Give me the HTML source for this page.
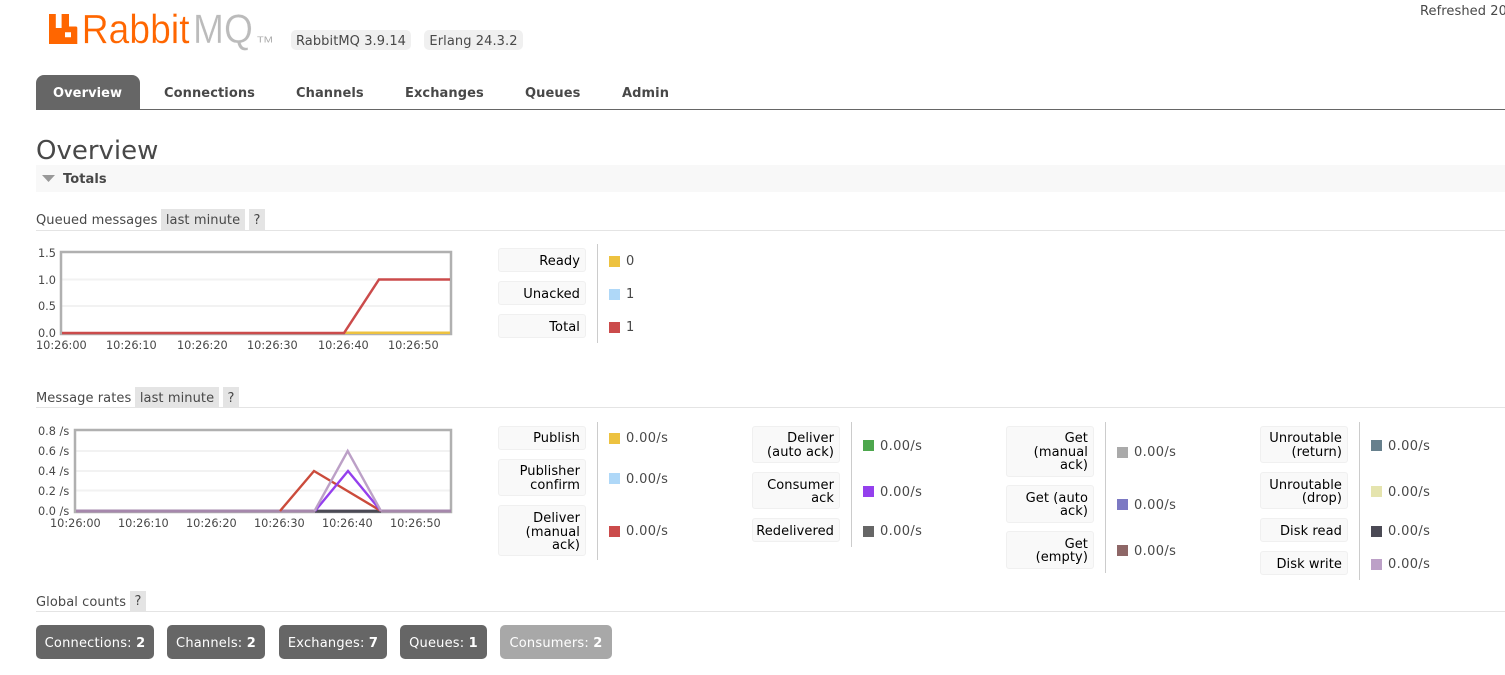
<!DOCTYPE html>
<html><head><meta charset="utf-8"><title>RabbitMQ Management</title>
<style>
html,body{margin:0;padding:0;background:#fff}
body{width:1505px;height:675px;overflow:hidden;position:relative;font-family:"DejaVu Sans","Liberation Sans",sans-serif;font-size:13px;color:#484848;letter-spacing:.08px}
div,span,a{position:absolute;white-space:nowrap}
.t{line-height:16px;height:16px}
.tab{top:86px;font-weight:bold;font-size:13px;line-height:16px;color:#484848}
.btn{background:#e4e4e4;text-align:center;height:21px;line-height:23px}
.hr{left:36px;width:1469px;height:1px;background:#e4e4e4}
.l{width:86px;background:#f9f9f9;border:1px solid #f0f0f0;border-radius:3px;color:#000;text-align:right;line-height:14px;display:flex;align-items:center;justify-content:flex-end;box-sizing:content-box}
.l p{margin:0 5px 0 0;white-space:nowrap;position:relative;top:2px}
.l.a p{top:1px}
.l.n{line-height:13px}
.l.n p{top:1.5px}
.l.n p.u{top:.5px}
.l.m{line-height:13.5px}
.d{width:1px;background:#ccc}
.s{width:11px;height:11px}
.s span{left:17px;top:-3px;line-height:16px;color:#484848;letter-spacing:.35px}
.s.a span{top:-2px}
.c{top:625px;height:34px;line-height:38px;background:#666;color:#fff;border-radius:5px;text-align:center;letter-spacing:.2px}
.y{font-size:11.3px;line-height:12px;color:#484848;letter-spacing:0}
</style></head><body>

<svg style="position:absolute;left:0;top:0" width="300" height="60">
<path fill="#f60" fill-rule="evenodd" d="M49 14H55.800V28H61.600V14H69V26.500H75.800Q77.300 26.500 77.300 28V44H49ZM65 32.300V37.300H71V32.300Z"/>
<text x="81.700" y="42.800" font-family="Liberation Sans" font-size="40.500" fill="#f60" stroke="#fff" stroke-width=".3" textLength="108" lengthAdjust="spacingAndGlyphs">Rabbit</text>
<text x="193" y="42.800" font-family="Liberation Sans" font-size="40.500" fill="#bbb" stroke="#fff" stroke-width=".3" textLength="60" lengthAdjust="spacingAndGlyphs">MQ</text>
<text x="257" y="42.500" font-family="Liberation Sans" font-size="8" fill="#aaa" textLength="16" lengthAdjust="spacingAndGlyphs">TM</text>
</svg>

<div style="left:291px;top:30px;width:120px;height:20px;line-height:23px;background:#f0f0f0;border-radius:5px;text-align:center">RabbitMQ 3.9.14</div>
<div style="left:424px;top:30px;width:99px;height:20px;line-height:23px;background:#f0f0f0;border-radius:5px;text-align:center">Erlang 24.3.2</div>
<div class="t" style="left:1420px;top:4px">Refreshed 20</div>

<div style="left:36px;top:75px;width:104px;height:34px;background:#666;border-radius:8px 8px 0 0"></div>
<div style="left:36px;top:109px;width:1469px;height:1px;background:#666"></div>
<div class="tab" style="left:53px;color:#fff">Overview</div>
<div class="tab" style="left:164px">Connections</div>
<div class="tab" style="left:296px">Channels</div>
<div class="tab" style="left:405px">Exchanges</div>
<div class="tab" style="left:525px">Queues</div>
<div class="tab" style="left:622px">Admin</div>

<div style="left:36px;top:134px;font-size:26px;line-height:34px;letter-spacing:0">Overview</div>
<div style="left:36px;top:165px;width:1469px;height:27px;background:#f8f8f8"></div>
<svg style="position:absolute;left:42px;top:175px" width="14" height="8"><path d="M0 0H13L6.500 7Z" fill="#999"/></svg>
<div class="t" style="left:63px;top:172px;font-weight:bold">Totals</div>

<div class="t" style="left:36px;top:213px">Queued messages</div>
<div class="btn" style="left:161px;top:209px;width:84px">last minute</div>
<div class="btn" style="left:249px;top:209px;width:16px">?</div>
<div class="hr" style="top:230px"></div>

<svg style="position:absolute;left:0;top:240px" width="470" height="110">
<g stroke="#f2f2f2" stroke-width="2"><path d="M61 39.500H451M61 66H451"/></g>
<rect x="61" y="12" width="390" height="82" fill="none" stroke="#b0b0b0" stroke-width="2.500"/>
<path d="M344 92.800H450" stroke="#edc240" stroke-width="2.500" fill="none"/>
<path d="M62 93H344L379 39.500H450" stroke="#cb4b4b" stroke-width="2.500" fill="none"/>
</svg>
<div class="y" style="left:38px;top:248px">1.5</div>
<div class="y" style="left:38px;top:275px">1.0</div>
<div class="y" style="left:38px;top:301px">0.5</div>
<div class="y" style="left:38px;top:328px">0.0</div>
<div class="y" style="left:36px;top:340px">10:26:00</div>
<div class="y" style="left:106px;top:340px">10:26:10</div>
<div class="y" style="left:177px;top:340px">10:26:20</div>
<div class="y" style="left:247px;top:340px">10:26:30</div>
<div class="y" style="left:318px;top:340px">10:26:40</div>
<div class="y" style="left:388px;top:340px">10:26:50</div>

<div class="l" style="left:498px;top:248px;height:22px"><p>Ready</p></div>
<div class="l" style="left:498px;top:281px;height:22px"><p>Unacked</p></div>
<div class="l" style="left:498px;top:314px;height:22px"><p>Total</p></div>
<div class="d" style="left:597px;top:244px;height:99px"></div>
<div class="s a" style="left:609px;top:256px;background:#edc240"><span>0</span></div>
<div class="s a" style="left:609px;top:289px;background:#afd8f8"><span>1</span></div>
<div class="s a" style="left:609px;top:322px;background:#cb4b4b"><span>1</span></div>

<div class="t" style="left:36px;top:391px">Message rates</div>
<div class="btn" style="left:135px;top:387px;width:84px">last minute</div>
<div class="btn" style="left:223px;top:387px;width:16px">?</div>
<div class="hr" style="top:407px"></div>

<svg style="position:absolute;left:0;top:420px" width="470" height="100">
<g stroke="#f2f2f2" stroke-width="2"><path d="M76 31H451M76 51H451M76 70.500H451"/></g>
<rect x="75" y="10" width="376" height="82" fill="none" stroke="#b0b0b0" stroke-width="2.500"/>
<path d="M76 91H451" stroke="#a688ac" stroke-width="3" fill="none"/>
<path d="M315 91.200H381" stroke="#4b4a55" stroke-width="3" fill="none"/>
<path d="M280 91L314 51L381 91" stroke="#cb4b3b" stroke-width="2.400" fill="none"/>
<path d="M315 91L348 51L381 91" stroke="#9440ed" stroke-width="2.400" fill="none"/>
<path d="M314.500 91L347.700 31L381 91" stroke="#bca0c7" stroke-width="2.400" fill="none"/>
</svg>
<div class="y" style="left:38px;top:426px">0.8 /s</div>
<div class="y" style="left:38px;top:446px">0.6 /s</div>
<div class="y" style="left:38px;top:466px">0.4 /s</div>
<div class="y" style="left:38px;top:486px">0.2 /s</div>
<div class="y" style="left:38px;top:506px">0.0 /s</div>
<div class="y" style="left:50px;top:518px">10:26:00</div>
<div class="y" style="left:118px;top:518px">10:26:10</div>
<div class="y" style="left:186px;top:518px">10:26:20</div>
<div class="y" style="left:254px;top:518px">10:26:30</div>
<div class="y" style="left:322px;top:518px">10:26:40</div>
<div class="y" style="left:390px;top:518px">10:26:50</div>

<div class="l a" style="left:498px;top:426px;height:22px"><p>Publish</p></div>
<div class="l a" style="left:498px;top:459px;height:35px"><p>Publisher<br>confirm</p></div>
<div class="l m" style="left:498px;top:505px;height:49px"><p>Deliver<br>(manual<br>ack)</p></div>
<div class="d" style="left:597px;top:422px;height:138px"></div>
<div class="s a" style="left:609px;top:433px;background:#edc240"><span>0.00/s</span></div>
<div class="s" style="left:609px;top:473px;background:#afd8f8"><span style="top:-1px">0.00/s</span></div>
<div class="s a" style="left:609px;top:526px;background:#cb4b4b"><span>0.00/s</span></div>

<div class="l a" style="left:752px;top:426px;height:35px"><p>Deliver<br>(auto ack)</p></div>
<div class="l n" style="left:752px;top:472px;height:35px"><p>Consumer<br>ack</p></div>
<div class="l" style="left:752px;top:518px;height:22px"><p>Redelivered</p></div>
<div class="d" style="left:851px;top:422px;height:125px"></div>
<div class="s" style="left:863px;top:440px;background:#4da74d"><span style="top:-1px">0.00/s</span></div>
<div class="s" style="left:863px;top:486px;background:#9440ed"><span style="top:-1px">0.00/s</span></div>
<div class="s a" style="left:863px;top:526px;background:#666"><span>0.00/s</span></div>

<div class="l a m" style="left:1006px;top:426px;height:49px"><p>Get<br>(manual<br>ack)</p></div>
<div class="l n" style="left:1006px;top:485px;height:36px"><p class="u">Get (auto<br>ack)</p></div>
<div class="l n" style="left:1006px;top:531px;height:36px"><p class="u">Get<br>(empty)</p></div>
<div class="d" style="left:1105px;top:422px;height:151px"></div>
<div class="s a" style="left:1117px;top:447px;background:#aaa"><span>0.00/s</span></div>
<div class="s" style="left:1117px;top:499px;background:#7c79c3"><span style="top:-1px">0.00/s</span></div>
<div class="s" style="left:1117px;top:545px;background:#8e6767"><span style="top:-1px">0.00/s</span></div>

<div class="l a" style="left:1260px;top:426px;height:35px"><p>Unroutable<br>(return)</p></div>
<div class="l n" style="left:1260px;top:472px;height:35px"><p>Unroutable<br>(drop)</p></div>
<div class="l" style="left:1260px;top:518px;height:22px"><p>Disk read</p></div>
<div class="l" style="left:1260px;top:551px;height:22px"><p>Disk write</p></div>
<div class="d" style="left:1359px;top:422px;height:158px"></div>
<div class="s" style="left:1371px;top:440px;background:#67808d"><span style="top:-1px">0.00/s</span></div>
<div class="s" style="left:1371px;top:486px;background:#e5e4ae"><span style="top:-1px">0.00/s</span></div>
<div class="s a" style="left:1371px;top:526px;background:#4b4a55"><span>0.00/s</span></div>
<div class="s a" style="left:1371px;top:559px;background:#bca0c7"><span>0.00/s</span></div>

<div class="t" style="left:36px;top:595px">Global counts</div>
<div class="btn" style="left:130px;top:591px;width:16px;height:20px;line-height:22px">?</div>
<div class="hr" style="top:611px"></div>

<div class="c" style="left:36px;width:118px">Connections: <b>2</b></div>
<div class="c" style="left:167px;width:98px">Channels: <b>2</b></div>
<div class="c" style="left:279px;width:108px">Exchanges: <b>7</b></div>
<div class="c" style="left:400px;width:87px">Queues: <b>1</b></div>
<div class="c" style="left:500px;width:112px;background:#a8a8a8">Consumers: <b>2</b></div>

</body></html>
